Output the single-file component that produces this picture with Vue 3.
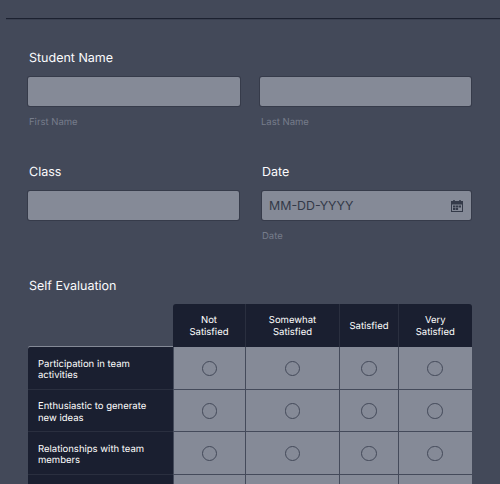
<template>
  <div class="form-page">
    <div class="divider"></div>

    <div class="field-row name-row">
      <div class="field-label full">Student Name</div>
      <div class="field">
        <div class="input"></div>
        <div class="sub-label">First Name</div>
      </div>
      <div class="field">
        <div class="input"></div>
        <div class="sub-label">Last Name</div>
      </div>
    </div>

    <div class="field-row class-row">
      <div class="field">
        <div class="field-label">Class</div>
        <div class="input"></div>
      </div>
      <div class="field date-field">
        <div class="field-label">Date</div>
        <div class="input date-input">
          <span>MM-DD-YYYY</span>
          <svg class="cal" viewBox="0 0 12 12" width="12" height="12">
            <path fill="#343a49" fill-rule="evenodd" d="M2.2 0h1.6v1h4.4V0h1.6v1H12v11H0V1h2.2zM1 4.4V11h10V4.4zM2 5.4h2.4v2H2zM4.9 5.4h2.2v2H4.9zM7.6 5.4H10v2H7.6zM2 8h2.4v2H2zM4.9 8h2.2v2H4.9z" />
          </svg>
        </div>
        <div class="sub-label">Date</div>
      </div>
    </div>

    <div class="field-label eval-label">Self Evaluation</div>
    <div class="matrix">
      <div class="corner"></div>
      <div
        v-for="(col, i) in columns"
        :key="col"
        class="head"
        :class="{ first: i === 0, last: i === columns.length - 1 }"
      >
        {{ col }}
      </div>
      <template v-for="(row, r) in rows" :key="r">
        <div class="row-name">{{ row }}</div>
        <div
          v-for="(col, i) in columns"
          :key="col"
          class="cell"
          :class="{ last: i === columns.length - 1 }"
        >
          <span class="radio"></span>
        </div>
      </template>
    </div>
  </div>
</template>

<script setup>
const columns = ['Not Satisfied', 'Somewhat Satisfied', 'Satisfied', 'Very Satisfied'];

// the fourth row is cut off by the window before its label starts
const rows = [
  'Participation in team activities',
  'Enthusiastic to generate new ideas',
  'Relationships with team members',
  ''
];
</script>

<style>
html,
body {
  margin: 0;
  background: #434959;
  overflow: hidden;
}
</style>

<style scoped>
.form-page {
  height: 484px;
  overflow: hidden;
  background: #434959;
  font-family: Inter, "Liberation Sans", sans-serif;
  text-rendering: geometricPrecision;
  color: #fff;
  box-sizing: border-box;
  padding-top: 18px;
}

.divider {
  height: 1px;
  margin-left: 6px;
  background: #1c2130;
  box-shadow: 0 1px 0 #3a4050;
}

.field-row {
  display: grid;
  padding: 0 29px 0 28px;
}

.name-row {
  grid-template-columns: 212px 211px;
  column-gap: 20px;
  margin-top: 30px;
}

.class-row {
  grid-template-columns: 210.5px 209px;
  column-gap: 23.5px;
  margin-top: 34px;
}

.full {
  grid-column: 1 / -1;
}

.field-label {
  font-size: 12.5px;
  line-height: 18px;
  font-weight: 400;
  padding: 1px 0 0 1px;
  margin-bottom: 9px;
  color: #fbfbfd;
}

.date-field .field-label,
.date-field .sub-label {
  padding-left: 0;
}

.input {
  height: 29px;
  background: #858a97;
  border-radius: 2px;
  box-shadow: 0 0 0 1px #363b4a;
}

.sub-label {
  font-size: 9.5px;
  line-height: 13px;
  color: #767c8b;
  margin-top: 10px;
  padding-left: 1px;
}

.date-input {
  display: flex;
  align-items: center;
  justify-content: space-between;
  padding: 0 8px 0 7px;
  font-size: 12.4px;
  color: #333948;
}

.cal {
  margin-top: 1px;
}

.eval-label {
  margin: 34px 0 8px 28px;
}

.matrix {
  display: grid;
  grid-template-columns: 145px 72px 94px 59px 73.5px;
  grid-template-rows: 43px repeat(4, 42.5px);
  margin-left: 28px;
  width: 443.5px;
}

.head {
  display: flex;
  align-items: center;
  justify-content: center;
  text-align: center;
  padding: 2px 12px 0;
  font-size: 9.5px;
  line-height: 11.6px;
  font-weight: 400;
  background-color: #1a1f30;
  background-image: radial-gradient(#262b3c 0.6px, transparent 0.7px);
  background-size: 4px 4px;
  border-left: 1px solid #2a2f3f;
  box-sizing: border-box;
}

.head.first {
  border-left: none;
  border-top-left-radius: 3px;
}

.head.last {
  border-top-right-radius: 3px;
}

.row-name {
  display: flex;
  align-items: center;
  padding: 5px 20px 0 10px;
  font-size: 9.5px;
  line-height: 11.6px;
  font-weight: 400;
  background-color: #1a1f30;
  background-image: radial-gradient(#262b3c 0.6px, transparent 0.7px);
  background-size: 4px 4px;
  border-bottom: 1px solid #2a2f3f;
  box-sizing: border-box;
}

.row-name:nth-child(6) {
  box-shadow: 0 -1px 0 #858a97;
  border-top-left-radius: 2px;
}

.cell {
  display: flex;
  align-items: center;
  justify-content: center;
  padding-top: 1px;
  background: #858a97;
  border-left: 1px solid #444a5a;
  border-bottom: 1px solid #444a5a;
  box-sizing: border-box;
}

.cell.last {
  padding-right: 1px;
}

.radio {
  width: 13.5px;
  height: 13.5px;
  border: 1px solid #434959;
  border-radius: 50%;
}
</style>
